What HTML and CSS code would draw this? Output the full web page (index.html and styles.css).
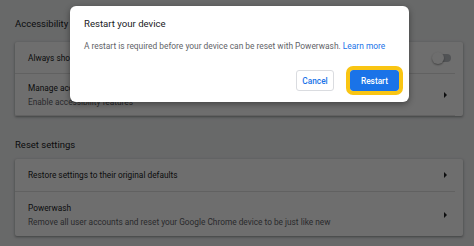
FILE: index.html
```html
<!DOCTYPE html>
<html lang="en">

<head>
    <meta charset="UTF-8">
    <meta name="viewport" content="width=device-width, initial-scale=1.0">
    <title>Restart your device</title>
    <link rel="stylesheet" href="styles.css">
</head>

<body>
    <main class="page">
        <h2 class="section-title">Accessibility</h2>
        <div class="card">
            <div class="row row-single">
                <span class="row-label">Always show accessibility options in the system menu</span>
                <span class="toggle"><span class="knob"></span></span>
            </div>
            <div class="row row-double">
                <div class="row-text">
                    <span class="row-label">Manage accessibility features</span>
                    <span class="row-sub">Enable accessibility features</span>
                </div>
                <span class="arrow"></span>
            </div>
        </div>

        <h2 class="section-title section-gap">Reset settings</h2>
        <div class="card">
            <div class="row row-single row-tall">
                <span class="row-label">Restore settings to their original defaults</span>
                <span class="arrow"></span>
            </div>
            <div class="row row-double row-last">
                <div class="row-text">
                    <span class="row-label">Powerwash</span>
                    <span class="row-sub">Remove all user accounts and reset your Google Chrome device to be just like new</span>
                </div>
                <span class="arrow"></span>
            </div>
        </div>
    </main>

    <div class="overlay"></div>

    <div class="dialog">
        <h3 class="dialog-title">Restart your device</h3>
        <p class="dialog-body">A restart is required before your device can be reset with Powerwash. <a href="#">Learn more</a></p>
        <div class="dialog-actions">
            <button type="button" class="btn btn-cancel">Cancel</button>
            <button type="button" class="btn btn-primary">Restart</button>
        </div>
    </div>
</body>

</html>
```

FILE: styles.css
```css
* {
    padding: 0;
    margin: 0;
    box-sizing: border-box;
}

body {
    width: 474px;
    height: 246px;
    overflow: hidden;
    background-color: #f1f3f4;
    font-family: Roboto, "Liberation Sans", sans-serif;
    color: #202124;
}

.page {
    padding: 15px 11px 0 15px;
}

.section-title {
    font-size: 9.5px;
    font-weight: 400;
    line-height: 18px;
    color: #202124;
    margin-bottom: 9px;
}

.section-gap {
    margin-top: 20px;
    margin-bottom: 5px;
}

.card {
    background-color: #fff;
    border-radius: 2px;
    box-shadow: 0 1px 2px rgba(60, 64, 67, 0.35), 0 1px 3px 1px rgba(60, 64, 67, 0.15);
}

.row {
    display: flex;
    align-items: center;
    justify-content: space-between;
    padding: 0 8px 0 13px;
    margin-right: 8px;
    border-bottom: 1px solid #e0e0e0;
}

.row-single {
    height: 32px;
}

.row-tall {
    height: 33px;
}

.row-double {
    height: 42px;
    padding-top: 1px;
}

.row-last {
    height: 44px;
    padding-top: 2px;
    border-bottom: none;
}

.row-text {
    display: flex;
    flex-direction: column;
}

.row-label {
    font-size: 8.3px;
    line-height: 14px;
    color: #202124;
}

.row-sub {
    font-size: 8.3px;
    line-height: 14px;
    color: #5f6368;
}

.arrow {
    width: 0;
    height: 0;
    border-top: 3px solid transparent;
    border-bottom: 3px solid transparent;
    border-left: 3px solid #202124;
}

.toggle {
    position: relative;
    width: 17px;
    height: 8px;
    border-radius: 4px;
    background-color: #bdc1c6;
    margin-right: -4px;
}

.knob {
    position: absolute;
    left: -2px;
    top: -2px;
    width: 12px;
    height: 12px;
    border-radius: 50%;
    background-color: #fff;
    box-shadow: 0 1px 2px rgba(0, 0, 0, 0.4);
}

.overlay {
    position: absolute;
    inset: 0;
    background-color: rgba(0, 0, 0, 0.57);
}

.dialog {
    position: absolute;
    left: 70px;
    top: 6px;
    width: 339px;
    height: 96px;
    padding: 10px 10px 11px 14px;
    background-color: #fff;
    border-radius: 6px;
    box-shadow: 0 2px 6px rgba(0, 0, 0, 0.4);
    display: flex;
    flex-direction: column;
}

.dialog-title {
    font-size: 9.6px;
    font-weight: 400;
    line-height: 16px;
    color: #202124;
}

.dialog-body {
    margin-top: 8px;
    font-size: 8.4px;
    line-height: 12px;
    color: #5f6368;
}

.dialog-body a {
    color: #1a73e8;
    text-decoration: none;
}

.dialog-actions {
    margin-top: auto;
    display: flex;
    justify-content: flex-end;
    gap: 16px;
}

.btn {
    height: 21px;
    border-radius: 3px;
    font-family: Roboto, "Liberation Sans", sans-serif;
    font-size: 8.3px;
    font-weight: 500;
}

.btn-cancel {
    width: 38px;
    border: 1px solid #dadce0;
    background-color: #fff;
    color: #1a73e8;
}

.btn-primary {
    width: 49px;
    border: none;
    background-color: #1a73e8;
    color: #fff;
    outline: 4px solid #f9c513;
    outline-offset: 0;
}
```
